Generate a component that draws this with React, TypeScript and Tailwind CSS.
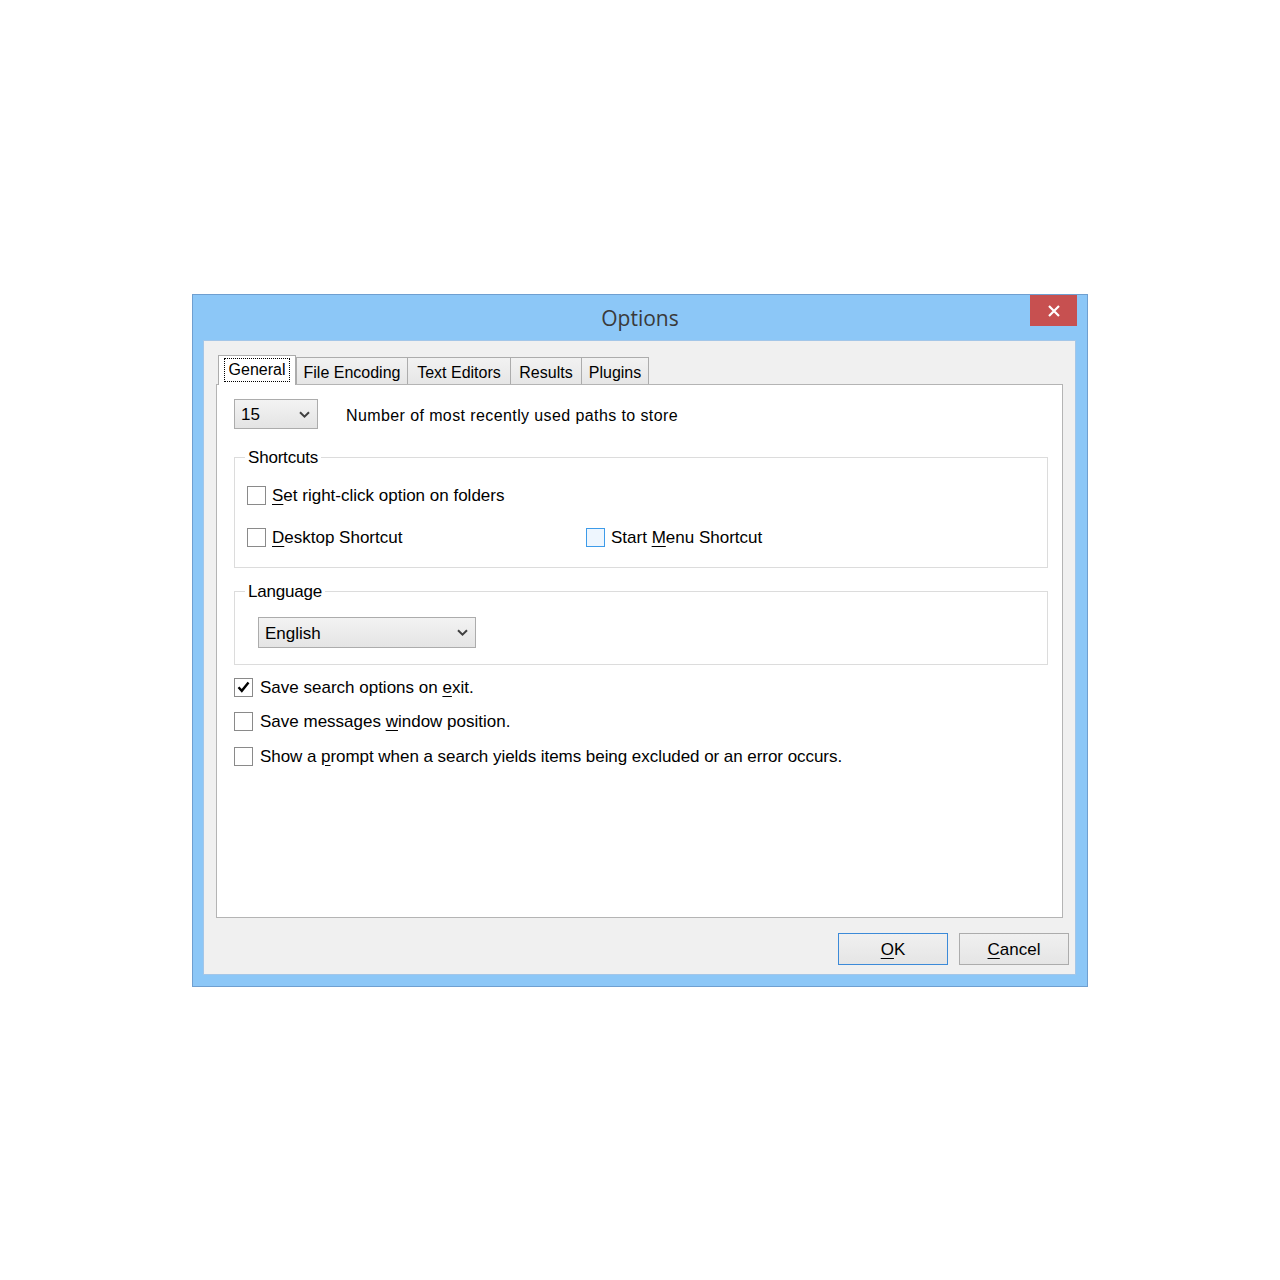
import React from "react";

const ui = "font-['Liberation_Sans',Arial,sans-serif] text-[17px] text-black";

function Chevron() {
  return (
    <svg width="11" height="7" viewBox="0 0 11 7" className="shrink-0">
      <path d="M1 1.2 L5.5 5.6 L10 1.2" fill="none" stroke="#404040" strokeWidth="2" />
    </svg>
  );
}

function Check({ checked, hot }: { checked?: boolean; hot?: boolean }) {
  return (
    <span
      className={
        "flex h-[19px] w-[19px] shrink-0 items-center justify-center border " +
        (hot ? "border-[#3d9be9] bg-[#eef6fe]" : "border-[#8a8a8a] bg-white")
      }
    >
      {checked && (
        <svg width="13" height="12" viewBox="0 0 13 12">
          <path d="M1.5 6.2 L4.8 9.8 L11.5 1.5" fill="none" stroke="#000" strokeWidth="2.4" />
        </svg>
      )}
    </span>
  );
}

// label with one underlined accelerator letter
function Label({ pre, key_, post }: { pre?: string; key_: string; post: string }) {
  return (
    <span className="pt-[2px] leading-[22px] whitespace-nowrap">
      {pre}
      <span className="underline decoration-1 underline-offset-[3px]">{key_}</span>
      {post}
    </span>
  );
}

function Tab({ label, selected, w }: { label: string; selected?: boolean; w: string }) {
  if (selected) {
    return (
      <div
        className={`relative z-10 -mb-px flex h-[30px] items-start justify-center border border-b-0 border-[#acacac] bg-white pt-[2px] text-[16px] ${w}`}
      >
        <span className="border border-dotted border-black px-[4px] leading-[22px]">{label}</span>
      </div>
    );
  }
  return (
    <div
      className={`-ml-px flex h-[27px] items-center justify-center border border-b-0 border-[#acacac] bg-gradient-to-b from-[#f2f2f2] to-[#e6e6e6] text-[16px] first:ml-0 ${w}`}
    >
      <span className="pt-[3px]">{label}</span>
    </div>
  );
}

function Combo({ value, w, h }: { value: string; w: string; h: string }) {
  return (
    <div
      className={`flex items-center justify-between border border-[#acacac] bg-gradient-to-b from-[#f3f3f3] to-[#e4e4e4] pl-[6px] pr-[7px] ${w} ${h}`}
    >
      <span className="pt-[2px]">{value}</span>
      <Chevron />
    </div>
  );
}

export default function App() {
  return (
    <div className={`min-h-[1280px] w-full bg-white pl-[192px] pt-[294px] ${ui}`}>
      <div className="relative flex h-[693px] w-[896px] flex-col border border-[#6f9fd0] bg-[#8cc7f7]">
        {/* title bar */}
        <div className="flex h-[45px] items-center justify-center pt-[2px] font-['Open_Sans',sans-serif] text-[21px] text-[#3a3a3a]">
          Options
        </div>
        <div className="absolute right-[10px] top-0 flex h-[31px] w-[47px] items-center justify-center bg-[#c75050]">
          <svg width="12" height="12" viewBox="0 0 12 12">
            <path d="M1 1 L11 11 M11 1 L1 11" stroke="#fff" strokeWidth="2.2" />
          </svg>
        </div>

        {/* client area */}
        <div className="mb-[11px] ml-[10px] mr-[11px] flex flex-1 flex-col border border-[#a3c6e8] bg-[#f0f0f0] pl-[12px] pr-[6px] pt-[13px]">
          {/* tabs */}
          <div className="flex h-[30px] items-end pl-[2px]">
            <Tab label="General" selected w="w-[78px]" />
            <div className="flex items-end">
              <Tab label="File Encoding" w="w-[112px]" />
              <Tab label="Text Editors" w="w-[104px]" />
              <Tab label="Results" w="w-[72px]" />
              <Tab label="Plugins" w="w-[68px]" />
            </div>
          </div>

          {/* tab page */}
          <div className="mr-[6px] flex h-[534px] flex-col border border-[#b4b4b4] bg-white pl-[17px] pr-[14px] pt-[14px]">
            <div className="flex items-center">
              <Combo value="15" w="w-[84px]" h="h-[30px]" />
              <span className="ml-[28px] pt-[3px] text-[16px] tracking-[0.4px]">
                Number of most recently used paths to store
              </span>
            </div>

            <fieldset className="mt-[18px] border border-[#dcdcdc]">
              <legend className="ml-[10px] px-[3px] leading-[20px] tracking-[-0.2px]">
                <span className="relative top-[1px]">Shortcuts</span>
              </legend>
              <div className="flex flex-col gap-[18px] pb-[18px] pl-[12px] pt-[16px]">
                <label className="flex items-center gap-[6px]">
                  <Check />
                  <Label key_="S" post="et right-click option on folders" />
                </label>
                <div className="flex items-center">
                  <label className="flex w-[339px] items-center gap-[6px]">
                    <Check />
                    <Label key_="D" post="esktop Shortcut" />
                  </label>
                  <label className="flex items-center gap-[6px]">
                    <Check hot />
                    <Label pre="Start " key_="M" post="enu Shortcut" />
                  </label>
                </div>
              </div>
            </fieldset>

            <fieldset className="mt-[13px] border border-[#dcdcdc]">
              <legend className="ml-[10px] px-[3px] leading-[20px] tracking-[-0.2px]">
                <span className="relative top-[1px]">Language</span>
              </legend>
              <div className="pb-[16px] pl-[23px] pt-[16px]">
                <Combo value="English" w="w-[218px]" h="h-[31px]" />
              </div>
            </fieldset>

            <div className="mt-[10px] flex flex-col">
              <label className="flex items-center gap-[7px]">
                <Check checked />
                <Label pre="Save search options on " key_="e" post="xit." />
              </label>
              <label className="mt-[10px] flex items-center gap-[7px]">
                <Check />
                <Label pre="Save messages " key_="w" post="indow position." />
              </label>
              <label className="mt-[11px] flex items-center gap-[7px] tracking-[-0.05px]">
                <Check />
                <Label
                  pre="Show a "
                  key_="p"
                  post="rompt when a search yields items being excluded or an error occurs."
                />
              </label>
            </div>
          </div>

          {/* buttons */}
          <div className="mt-[15px] flex justify-end gap-[11px]">
            <button className="flex h-[32px] w-[110px] items-center justify-center border border-[#3c8ad8] bg-gradient-to-b from-[#f0f0f0] to-[#e5e5e5]">
              <Label key_="O" post="K" />
            </button>
            <button className="flex h-[32px] w-[110px] items-center justify-center border border-[#acacac] bg-gradient-to-b from-[#f0f0f0] to-[#e5e5e5]">
              <Label key_="C" post="ancel" />
            </button>
          </div>
        </div>
      </div>
    </div>
  );
}
